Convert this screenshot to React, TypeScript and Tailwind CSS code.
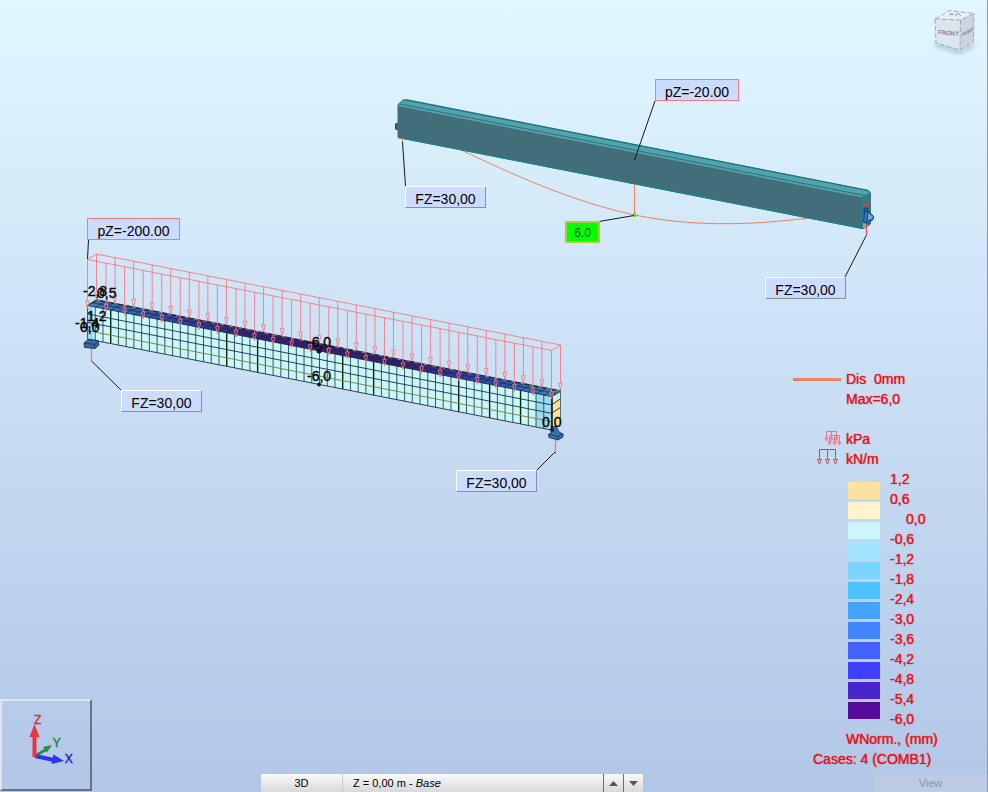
import React from "react";

const legend = [
  { value: "1,2", color: "bg-[#ffe1a0]" },
  { value: "0,6", color: "bg-[#fff3d0]" },
  { value: "0,0", color: "bg-[#ccf5ff]" },
  { value: "-0,6", color: "bg-[#a3e4ff]" },
  { value: "-1,2", color: "bg-[#79d5ff]" },
  { value: "-1,8", color: "bg-[#4cc1ff]" },
  { value: "-2,4", color: "bg-[#42a4ff]" },
  { value: "-3,0", color: "bg-[#4084ff]" },
  { value: "-3,6", color: "bg-[#4162ff]" },
  { value: "-4,2", color: "bg-[#403fff]" },
  { value: "-4,8", color: "bg-[#4a24cc]" },
  { value: "-5,4", color: "bg-[#560b99]" },
  { value: "-6,0", color: "" },
];

const tags = [
  { text: "pZ=-20.00", kind: "load", place: "left-[655px] top-[79px] w-[84px]" },
  { text: "FZ=30,00", kind: "force", place: "left-[405px] top-[186px] w-[81px]" },
  { text: "6.0", kind: "max", place: "left-[565px] top-[221px] w-[35px]" },
  { text: "FZ=30,00", kind: "force", place: "left-[765px] top-[277px] w-[81px]" },
  { text: "pZ=-200.00", kind: "load", place: "left-[87px] top-[218px] w-[93px]" },
  { text: "FZ=30,00", kind: "force", place: "left-[121px] top-[390px] w-[81px]" },
  { text: "FZ=30,00", kind: "force", place: "left-[456px] top-[470px] w-[81px]" },
];

const tagStyle: Record<string, string> = {
  load: "border border-[#f27a88] bg-[#ccdcff] text-sm",
  force:
    "border border-t-white border-l-white border-r-[#8290a8] border-b-[#8290a8] bg-[#ccdcff] text-sm",
  max: "border-2 border-[#a8d038] bg-[#00ff00] text-xs text-[#063c06]",
};

// plate geometry: 60 columns of shell elements, 26 load arrows per row
const left = 87.5;
const length = 464;
const slope = 91 / 464;
const at = (x: number, y0: number) => y0 + (x - left) * slope;
const columns = Array.from({ length: 61 }, (_, i) => left + (i * length) / 60);
const arrows = Array.from({ length: 26 }, (_, i) => left + (i * length) / 25);
const darkColumns = [3, 18, 22, 33, 37, 48, 52, 56];

const values = [
  { text: "-2,8", x: 83, y: 296 },
  { text: "0,5", x: 97, y: 298 },
  { text: "1,2", x: 87, y: 321 },
  { text: "-1,4", x: 75, y: 328 },
  { text: "0,0", x: 80, y: 332 },
  { text: "-6,0", x: 307, y: 347 },
  { text: "-6,0", x: 307, y: 381 },
  { text: "0,0", x: 542, y: 427 },
];

const LoadArrow = ({ x, top, tip }: { x: number; top: number; tip: number }) => (
  <path d={`M${x} ${top}V${tip - 7}M${x - 1.8} ${tip - 7}h3.6L${x} ${tip}z`} />
);

const Plate = () => (
  <g>
    <polygon points="87.5,305.5 551.5,396.5 551.5,430 87.5,339" fill="#cbf6fc" />
    <polygon points="536,393.5 551.5,396.5 551.5,430 536,427" fill="#9bdcf3" />
    <polygon points="87.5,306 93,307 93,340 87.5,339" fill="#9bdcf3" />
    <polygon points="551.5,396.5 560.5,391 560.5,424 551.5,430" fill="#ffe09a" />
    <polygon points="551.5,396.5 560.5,391 560.5,397 551.5,403" fill="#c9f0ef" />
    <polygon
      points="87.5,305.5 96.5,299.5 560.5,390.5 551.5,396.5"
      fill="url(#deck)"
    />
    <g stroke="#1b2f38" strokeWidth="0.9" fill="none">
      {columns.map((x, i) => (
        <line
          key={i}
          x1={x}
          x2={x}
          y1={at(x, 305.5)}
          y2={at(x, 339)}
          stroke={darkColumns.includes(i) ? "#07280f" : "#204a50"}
          strokeWidth={darkColumns.includes(i) ? 1.4 : 0.9}
        />
      ))}
      {columns.map((x, i) => (
        <line
          key={i}
          x1={x}
          x2={x + 9}
          y1={at(x, 305.5)}
          y2={at(x, 301)}
          opacity="0.7"
        />
      ))}
      <path d="M87.5 305.5L551.5 396.5L560.5 390.5M87.5 313.9L551.5 404.9l9-6M87.5 322.3L551.5 413.3l9-6M87.5 339L551.5 430M87.5 305.5L96.5 299.5" />
      <path d="M92 302.5L556 393.5" strokeWidth="1.6" opacity="0.6" />
      <path d="M87.5 330.6L551.5 421.6" stroke="#7b7c32" />
      <path d="M96.5 300L560.5 391" stroke="#26253a" strokeWidth="1.4" />
      <path d="M96.5 300L560.5 391" stroke="#a39c78" strokeDasharray="4 5" />
      <path d="M87.5 305.5V339M560.5 390.5V424" stroke="#3f6070" />
      <path d="M552 396V430" stroke="#101c20" strokeWidth="1.6" />
    </g>
    <g stroke="#f87883" strokeWidth="0.9" fill="none">
      <path d="M87.5 259.5L551.5 350.5L560.5 345L96.5 254z" />
      {arrows.map((x, i) => (
        <LoadArrow key={i} x={x} top={at(x, 259.5)} tip={at(x, 308)} />
      ))}
      {arrows.map((x, i) => (
        <LoadArrow key={i} x={x + 9} top={at(x, 254)} tip={at(x, 299)} />
      ))}
    </g>
    <path d="M91.5 348v13M555.5 440v14" stroke="#ee7884" strokeWidth="1.3" />
    <g stroke="#17365f" strokeWidth="0.9" strokeLinejoin="round">
      <polygon points="84,343 88,339.5 98,340.5 99,345 95,348.5 84.5,347.5" fill="#3c679c" />
      <path d="M84 343l10.5 1.5L99 341M94.5 344.5l.5 4" fill="none" />
      <polygon points="552,427 556,426 559,432 563,434 563,437 558,440 549,437.5 548.5,434.5 552,432" fill="#3c70ad" />
      <path d="M548.5 434.5l9.5 2 5-2.5M558 436.5v3.5" fill="none" />
      <circle cx="552" cy="430" r="1.8" fill="#0a1c30" />
    </g>
    <path d="M88.5 240L87.5 259M91.5 361L121 390M555 452L537 470" stroke="#16181c" />
  </g>
);

const Beam = () => (
  <g>
    <rect x="395.5" y="123.5" width="3" height="6" rx="1" fill="#3b6494" stroke="#17365f" />
    <path
      d="M460 149.5C520 178 575 202 634.5 215C670 222 700 224 730 223.7C757 223.5 785 221 808 218"
      fill="none"
      stroke="#ee8062"
    />
    <polygon
      points="398,104.5 403,100 407,99.7 868,190.3 870.5,192.5 870.5,224 864,228.5 862,228.5 398,137.5"
      fill="#53a2ad"
      stroke="#1b8383"
      strokeLinejoin="round"
    />
    <polygon points="398,106 862.5,197.5 862.5,228.5 398,137.5" fill="#416e79" />
    <polygon points="862.5,197 870.5,193 870.5,224 862.5,228.5" fill="#48747f" />
    <path d="M862.5 197L870.5 192.5M862.5 197V228.5L398 137.5" fill="none" stroke="#168a88" />
    <path d="M400 104L864.5 195.5" fill="none" stroke="#1f6e76" strokeWidth="0.9" />
    <path d="M404 99.8L868 190.5" fill="none" stroke="#1f6e76" strokeWidth="0.9" />
    <path d="M402.5 138v4M634.5 185v30" stroke="#ee8062" />
    <circle cx="634.5" cy="215" r="2" fill="#6fd11c" />
    <g stroke="#123d78" strokeWidth="0.9">
      <rect x="864" y="208" width="4" height="4" fill="#255b9b" />
      <polygon points="864.5,212 868,211.5 873.5,216 873,219.5 868,223 863.5,221.5" fill="#3972bd" />
      <polygon points="868,212 873.5,216.5 872.5,219.5 867,221" fill="#6ca4ed" />
    </g>
    <path d="M866 204v3" stroke="#dd3b4c" strokeWidth="3" />
    <path d="M863 223l5 2-3 3-2 0z" fill="#9da7a6" />
    <path d="M866.5 224v12" stroke="#e65062" strokeWidth="1.3" />
    <path d="M655 101L634.5 160M402.5 142L405.5 186M866 236L845 277M634 215.5L599 221.5" stroke="#16181c" />
  </g>
);

const Scene = () => (
  <div className="absolute top-0 left-0">
    <svg width="988" height="520" viewBox="0 0 988 520" role="img" aria-label="3D model">
      <defs>
        <linearGradient id="deck" x1="0" x2="1" y1="0" y2="0">
          <stop offset="0" stopColor="#3f83cc" />
          <stop offset="0.12" stopColor="#2f5cc0" />
          <stop offset="0.22" stopColor="#3838a8" />
          <stop offset="0.34" stopColor="#3c1e80" />
          <stop offset="0.66" stopColor="#3a1a74" />
          <stop offset="0.78" stopColor="#3434ac" />
          <stop offset="0.88" stopColor="#2f54c4" />
          <stop offset="1" stopColor="#478cc8" />
        </linearGradient>
      </defs>
      <Beam />
      <Plate />
      <circle cx="319" cy="351" r="2.5" fill="#101418" />
      <circle cx="319" cy="384.5" r="2" fill="#101418" />
      <g fontSize="14" fill="#050505" stroke="#050505" strokeWidth="0.4">
        {values.map((v, i) => (
          <text key={i} x={v.x} y={v.y}>
            {v.text}
          </text>
        ))}
      </g>
    </svg>
    {tags.map((tag, i) => (
      <div
        key={i}
        className={`absolute flex h-[22px] items-end justify-center ${tagStyle[tag.kind]} ${tag.place}`}
      >
        <span className="leading-4">{tag.text}</span>
      </div>
    ))}
  </div>
);

const ViewCube = () => (
  <svg width="56" height="60" viewBox="0 0 56 60" role="img" aria-label="View cube">
    <defs>
      <filter id="soft">
        <feGaussianBlur stdDeviation="2" />
      </filter>
    </defs>
    <polygon points="3,42 30,50 44,42 42,48 28,54 5,47" fill="#8fa6b4" opacity="0.6" filter="url(#soft)" />
    <polygon points="4,19 18,10.5 43,13.5 29.5,20" fill="#e5eff7" />
    <polygon points="4,19 29.5,20 29,50 5,43" fill="#dde5ee" />
    <polygon points="29.5,20 43,13.5 42.5,42 29,50" fill="#cbd4df" />
    <path
      d="M4 19L18 10.5L43 13.5L29.5 20zM4 19L5 43L29 50L42.5 42L43 13.5M29.5 20L29 50"
      fill="none"
      stroke="#939da8"
      strokeWidth="0.8"
      strokeDasharray="5 2"
    />
    <g fill="#7c8590" stroke="#7c8590" strokeWidth="0.2">
      <text x="7" y="34" fontSize="6" transform="rotate(6 7 34)">FRONT</text>
      <text x="32" y="36" fontSize="4" transform="rotate(-28 32 36)">RIGHT</text>
    </g>
    <path d="M19 13.5l3 1.5M21.5 13.3l-2 2M24 15.5l3-2 3 2" fill="none" stroke="#8f99a4" />
  </svg>
);

const Axes = () => (
  <div className="mb-px h-[92px] w-[92px] border-2 border-t-[#dce6f2] border-r-[#697381] border-b-[#697381] border-l-[#dce6f2]">
    <svg width="88" height="88" viewBox="0 0 88 88" role="img" aria-label="Axes">
      <path d="M33 55L45 48" stroke="#2c8b48" strokeWidth="3" />
      <polygon points="50,44 41,46 45,51.5" fill="#2c8b48" />
      <path d="M33 55L52 59" stroke="#2b35ee" strokeWidth="4" />
      <polygon points="62,60 51.5,53.5 49.5,63" fill="#2b35ee" />
      <path d="M32.5 56V34" stroke="#ee3340" strokeWidth="4" />
      <polygon points="32.5,23 27.5,36 37.5,36" fill="#ee3340" />
      <g fontFamily="Noto Sans, sans-serif" fontSize="13" strokeWidth="0.4">
        <text x="32" y="23" fill="#d92b3c" stroke="#d92b3c">Z</text>
        <text x="51" y="46" fill="#20883b" stroke="#20883b">Y</text>
        <text x="63" y="62" fill="#1d22c5" stroke="#1d22c5">X</text>
      </g>
    </svg>
  </div>
);

const StatusBar = () => (
  <div className="ml-[169px] flex h-[18px] bg-linear-to-b from-[#fafafa] to-[#d8d8d8] text-[11px] leading-[18px] text-black">
    <button className="w-[82px] border-r border-[#cdcdcd]">3D</button>
    <button className="w-[260px] px-[10px] text-left">
      Z = 0,00 m - <em>Base</em>
    </button>
    <button className="flex w-5 items-center justify-center border-l border-[#6d6d6d]" aria-label="Level up">
      <svg width="9" height="5" viewBox="0 0 9 5">
        <path d="M4.5 0L9 5H0z" fill="#565656" />
      </svg>
    </button>
    <button className="flex w-5 items-center justify-center border-l border-[#6d6d6d]" aria-label="Level down">
      <svg width="9" height="5" viewBox="0 0 9 5">
        <path d="M0 0h9L4.5 5z" fill="#565656" />
      </svg>
    </button>
  </div>
);

const Legend = () => (
  <section className="pb-[5px] text-sm leading-5 text-[#e8121c] [text-shadow:0_0_1px_#e8121c]">
    <div className="flex items-center gap-[5px]">
      <span className="h-[3px] w-12 bg-[#ee835c]"></span>
      <span className="whitespace-pre">Dis  0mm</span>
    </div>
    <p className="ml-[53px]">Max=6,0</p>

    <div className="mt-5 flex items-center gap-[5px]">
      <svg width="48" height="18" viewBox="0 0 48 18" fill="none" stroke="#ee7484">
        <path d="M33.5 9V1.5h10V5M38.5 1.5V9M43.5 5V9M36.5 13V5.5h10V13M41.5 5.5V13" />
        <path d="M32 8h3l-1.5 3zM37 8h3l-1.5 3zM42 8h3l-1.5 3zM35 12h3l-1.5 3zM40 12h3l-1.5 3zM45 12h3l-1.5 3z" />
      </svg>
      <span>kPa</span>
    </div>
    <div className="flex items-center gap-[5px]">
      <svg width="48" height="20" viewBox="0 0 48 20" fill="none" stroke="#d8404e">
        <path d="M26.5 10V.5h16V10M34.5 .5V10" />
        <path d="M24.5 10.5h4l-2 4.5zM32.5 10.5h4l-2 4.5zM40.5 10.5h4l-2 4.5z" />
      </svg>
      <span>kN/m</span>
    </div>

    <div className="ml-[55px] flex gap-[10px]">
      <div className="flex flex-col gap-[3px] pt-[13px]">
        {legend.slice(0, 12).map((row) => (
          <div key={row.value} className={`h-[17px] w-8 ${row.color}`}></div>
        ))}
      </div>
      <ul>
        {legend.map((row) => (
          <li key={row.value} className={row.value === "0,0" ? "pl-4" : ""}>
            {row.value}
          </li>
        ))}
      </ul>
    </div>

    <p className="ml-[53px]">WNorm., (mm)</p>
    <p className="ml-5">Cases: 4 (COMB1)</p>
  </section>
);

export default function App() {
  return (
    <main className="relative flex min-h-screen flex-col justify-between overflow-hidden border-r border-[#8c9cb0] bg-linear-to-b from-[#e1f7ff] to-[#b2c6e7] font-['Liberation_Sans',Arial,sans-serif] text-black">
      <Scene />
      <header className="flex justify-end">
        <ViewCube />
      </header>
      <div className="flex items-end">
        <Axes />
        <StatusBar />
        <div className="ml-auto flex w-[194px] flex-col">
          <Legend />
          <button className="h-[18px] w-[113px] self-end bg-[#bccbe3] text-[11px] leading-[18px] text-[#8796b4]">
            View
          </button>
        </div>
      </div>
    </main>
  );
}
